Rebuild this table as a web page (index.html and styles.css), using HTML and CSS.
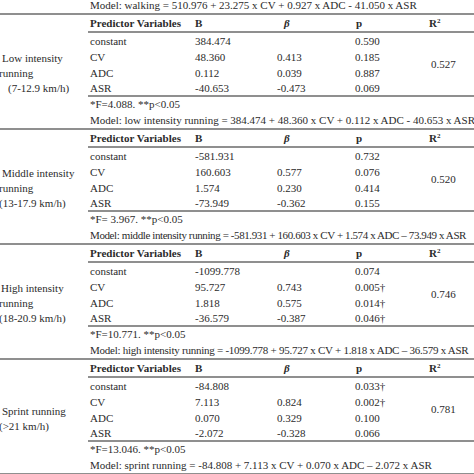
FILE: index.html
```html
<!DOCTYPE html>
<html>
<head>
<meta charset="utf-8">
<link rel="stylesheet" href="styles.css">
</head>
<body>
<div class="table">
  <div class="prev">Model: walking = 510.976 + 23.275 x CV + 0.927 x ADC - 41.050 x ASR</div>

  <section class="block">
    <div class="label"><span class="l1">Low intensity</span><span>running</span><span class="l3">(7-12.9 km/h)</span></div>
    <div class="h pred">Predictor Variables</div><div class="h b">B</div><div class="h beta"><i>β</i></div><div class="h p">p</div><div class="h r">R<sup>2</sup></div>
    <div class="rval">0.527</div>
    <div class="pred">constant</div><div class="b">384.474</div><div class="beta"></div><div class="p">0.590</div>
    <div class="pred">CV</div><div class="b">48.360</div><div class="beta">0.413</div><div class="p">0.185</div>
    <div class="pred">ADC</div><div class="b">0.112</div><div class="beta">0.039</div><div class="p">0.887</div>
    <div class="pred end">ASR</div><div class="b end">-40.653</div><div class="beta end">-0.473</div><div class="p end">0.069</div>
    <div class="note">*F=4.088. **p&lt;0.05</div>
    <div class="model">Model: low intensity running = 384.474 + 48.360 x CV + 0.112 x ADC - 40.653 x ASR</div>
  </section>

  <section class="block">
    <div class="label"><span class="l1">Middle intensity</span><span>running</span><span>(13-17.9 km/h)</span></div>
    <div class="h pred">Predictor Variables</div><div class="h b">B</div><div class="h beta"><i>β</i></div><div class="h p">p</div><div class="h r">R<sup>2</sup></div>
    <div class="rval">0.520</div>
    <div class="pred">constant</div><div class="b">-581.931</div><div class="beta"></div><div class="p">0.732</div>
    <div class="pred">CV</div><div class="b">160.603</div><div class="beta">0.577</div><div class="p">0.076</div>
    <div class="pred">ADC</div><div class="b">1.574</div><div class="beta">0.230</div><div class="p">0.414</div>
    <div class="pred end">ASR</div><div class="b end">-73.949</div><div class="beta end">-0.362</div><div class="p end">0.155</div>
    <div class="note">*F= 3.967. **p&lt;0.05</div>
    <div class="model tighter">Model: middle intensity running = -581.931 + 160.603 x CV + 1.574 x ADC – 73.949 x ASR</div>
  </section>

  <section class="block">
    <div class="label"><span class="l1b">High intensity</span><span>running</span><span>(18-20.9 km/h)</span></div>
    <div class="h pred">Predictor Variables</div><div class="h b">B</div><div class="h beta"><i>β</i></div><div class="h p">p</div><div class="h r">R<sup>2</sup></div>
    <div class="rval">0.746</div>
    <div class="pred">constant</div><div class="b">-1099.778</div><div class="beta"></div><div class="p">0.074</div>
    <div class="pred">CV</div><div class="b">95.727</div><div class="beta">0.743</div><div class="p">0.005†</div>
    <div class="pred">ADC</div><div class="b">1.818</div><div class="beta">0.575</div><div class="p">0.014†</div>
    <div class="pred end">ASR</div><div class="b end">-36.579</div><div class="beta end">-0.387</div><div class="p end">0.046†</div>
    <div class="note">*F=10.771. **p&lt;0.05</div>
    <div class="model tight">Model: high intensity running = -1099.778 + 95.727 x CV + 1.818 x ADC – 36.579 x ASR</div>
  </section>

  <section class="block last">
    <div class="label"><span class="l1">Sprint running</span><span>(&gt;21 km/h)</span></div>
    <div class="h pred">Predictor Variables</div><div class="h b">B</div><div class="h beta"><i>β</i></div><div class="h p">p</div><div class="h r">R<sup>2</sup></div>
    <div class="rval">0.781</div>
    <div class="pred">constant</div><div class="b">-84.808</div><div class="beta"></div><div class="p">0.033†</div>
    <div class="pred">CV</div><div class="b">7.113</div><div class="beta">0.824</div><div class="p">0.002†</div>
    <div class="pred">ADC</div><div class="b">0.070</div><div class="beta">0.329</div><div class="p">0.100</div>
    <div class="pred end">ASR</div><div class="b end">-2.072</div><div class="beta end">-0.328</div><div class="p end">0.066</div>
    <div class="note">*F=13.046. **p&lt;0.05</div>
    <div class="model">Model: sprint running = -84.808 + 7.113 x CV + 0.070 x ADC – 2.072 x ASR</div>
  </section>
</div>
</body>
</html>
```

FILE: styles.css
```css
html, body {
  margin: 0;
  padding: 0;
  background: #ffffff;
}

.table {
  width: 474px;
  height: 474px;
  overflow: hidden;
  font-family: "Liberation Serif", "Times New Roman", serif;
  font-size: 11px;
  color: #2b2b2b;
}

.prev {
  height: 13px;
  line-height: 11px;
  padding-left: 90px;
  white-space: nowrap;
}

.block {
  display: grid;
  grid-template-columns: 88px 105px 82px 78px 49px 72px;
  grid-template-rows: 18px repeat(4, 16px) 15px 16px;
  border-top: 2px solid #8f8f8f;
}

.block.last {
  border-bottom: 2px solid #8f8f8f;
}

.block > div {
  white-space: nowrap;
  line-height: 16px;
}

.label {
  grid-column: 1;
  grid-row: 1 / -1;
  align-self: center;
  display: flex;
  flex-direction: column;
  margin-left: -1px;
  padding-top: 4px;
  line-height: 15px !important;
}

.label .l1 { padding-left: 3px; }
.label .l1b { padding-left: 2px; }
.label .l3 { padding-left: 9px; }

.h {
  font-weight: bold;
  line-height: 16px !important;
  border-bottom: 2px solid #8f8f8f;
}

.h sup {
  font-size: 7px;
  vertical-align: 4px;
  line-height: 0;
}

.pred { padding-left: 2px; }
.b { padding-left: 2px; }
.beta { padding-left: 2px; }
.h.beta { padding-left: 9px; }
.p { padding-left: 2px; }
.h.p { padding-left: 3px; }
.h.r { padding-left: 27px; }

.rval {
  grid-column: 6;
  grid-row: 2 / 6;
  padding-left: 29px;
  display: flex;
  align-items: center;
  border-bottom: 2px solid #8f8f8f;
}

.end {
  border-bottom: 2px solid #8f8f8f;
  line-height: 14px !important;
}

.note {
  grid-column: 2 / -1;
  grid-row: 6;
  padding-left: 2px;
  line-height: 15px !important;
}

.model {
  grid-column: 2 / -1;
  grid-row: 7;
  padding-left: 2px;
}

.model.tight {
  letter-spacing: -0.25px;
}

.model.tighter {
  letter-spacing: -0.4px;
}
```
